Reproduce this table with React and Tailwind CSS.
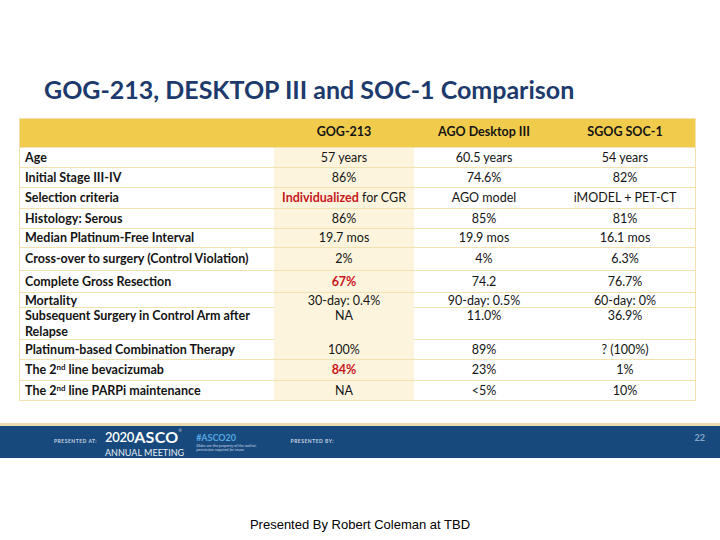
const rows = [
  { label: 'Age', h: 'h-[20px]', a: '57 years', b: '60.5 years', c: '54 years' },
  { label: 'Initial Stage III-IV', h: 'h-[20px]', a: '86%', b: '74.6%', c: '82%' },
  {
    label: 'Selection criteria',
    h: 'h-[21px]',
    a: (
      <span>
        <span className="font-bold text-[#c8161d]">Individualized</span> for CGR
      </span>
    ),
    b: 'AGO model',
    c: 'iMODEL + PET-CT',
  },
  { label: 'Histology: Serous', h: 'h-[20px]', a: '86%', b: '85%', c: '81%' },
  { label: 'Median Platinum-Free Interval', h: 'h-[19px]', a: '19.7 mos', b: '19.9 mos', c: '16.1 mos' },
  { label: 'Cross-over to surgery (Control Violation)', h: 'h-[23px]', a: '2%', b: '4%', c: '6.3%' },
  {
    label: 'Complete Gross Resection',
    h: 'h-[22px]',
    a: <span className="font-bold text-[#c8161d]">67%</span>,
    b: '74.2',
    c: '76.7%',
  },
  { label: 'Mortality', h: 'h-[15px]', a: '30-day: 0.4%', b: '90-day: 0.5%', c: '60-day: 0%' },
  {
    label: 'Subsequent Surgery in Control Arm after Relapse',
    h: 'h-[32px]',
    top: true,
    a: 'NA',
    b: '11.0%',
    c: '36.9%',
  },
  { label: 'Platinum-based Combination Therapy', h: 'h-[20px]', a: '100%', b: '89%', c: '? (100%)' },
  {
    label: (
      <>
        The 2<sup className="text-[8px]">nd</sup> line bevacizumab
      </>
    ),
    h: 'h-[21px]',
    a: <span className="font-bold text-[#c8161d]">84%</span>,
    b: '23%',
    c: '1%',
  },
  {
    label: (
      <>
        The 2<sup className="text-[8px]">nd</sup> line PARPi maintenance
      </>
    ),
    h: 'h-[20px]',
    a: 'NA',
    b: '<5%',
    c: '10%',
  },
]

function Row({ row }) {
  const align = row.top ? 'items-start' : 'items-center'
  return (
    <div className={`grid grid-cols-[254px_140px_140px_142px] border-t border-[#f1e2b0] ${row.h}`}>
      <div className={`flex ${align} pl-[5px] pr-2 font-bold leading-[16px]`}>
        <span>{row.label}</span>
      </div>
      <div className={`flex ${align} justify-center bg-[#fdf4dd] leading-[16px]`}>{row.a}</div>
      <div className={`flex ${align} justify-center leading-[16px]`}>{row.b}</div>
      <div className={`flex ${align} justify-center leading-[16px]`}>{row.c}</div>
    </div>
  )
}

export default function App() {
  return (
    <div className="w-[720px] h-[540px] bg-white flex flex-col overflow-hidden font-['Lato',sans-serif] text-[#141414]">
      {/* slide */}
      <div className="flex flex-col">
        <h1 className="pt-[73px] pl-[44px] text-[25px] leading-[32px] font-bold text-[#1d3a6c]">
          GOG-213, DESKTOP III and SOC-1 Comparison
        </h1>

        <div className="mt-[13px] ml-[19px] w-[677px] border border-[#f1e2b0] text-[12.5px]">
          <div className="grid grid-cols-[254px_140px_140px_142px] h-[28px] bg-[#f1cc4c] font-bold">
            <div />
            <div className="flex justify-center pt-[4px]">GOG-213</div>
            <div className="flex justify-center pt-[4px]">AGO Desktop III</div>
            <div className="flex justify-center pt-[4px]">SGOG SOC-1</div>
          </div>
          {rows.map((row, i) => (
            <Row key={i} row={row} />
          ))}
        </div>

        {/* footer band */}
        <div className="mt-[22px] h-[3px] bg-[#eadcae]" />
        <div className="h-[32px] bg-[#17497c] flex items-center relative">
          <span className="ml-[54px] text-[5px] font-bold tracking-[0.1em] text-[#c9d4e2]">PRESENTED AT:</span>
          <div className="ml-[8px] flex flex-col items-start text-white">
            <div className="flex items-end leading-[20px]">
              <span className="text-[13px] font-semibold tracking-[-0.02em]">2020</span>
              <span className="text-[16px] font-bold tracking-[0.02em]">ASCO</span>
              <span className="text-[4px] self-start leading-[8px]">®</span>
            </div>
            <span className="text-[9px] leading-[11px] text-[#e8eef6]">ANNUAL MEETING</span>
          </div>
          <div className="ml-[12px] flex flex-col leading-none">
            <span className="text-[9px] font-bold text-[#55a8e2]">#ASCO20</span>
            <span className="mt-[2px] text-[4px] italic text-[#c9d4e2]">Slides are the property of the author,</span>
            <span className="text-[4px] italic text-[#c9d4e2]">permission required for reuse.</span>
          </div>
          <span className="ml-[34px] text-[5px] font-bold tracking-[0.1em] text-[#c9d4e2]">PRESENTED BY:</span>
          <span className="absolute right-[15px] top-[5px] text-[9px] font-bold text-[#86a6cc]">22</span>
        </div>
      </div>

      {/* caption */}
      <div className="mt-[59px] text-center text-[13px] leading-[16px] text-black font-['Liberation_Sans',Arial,sans-serif]">
        Presented By Robert Coleman at TBD
      </div>
    </div>
  )
}
